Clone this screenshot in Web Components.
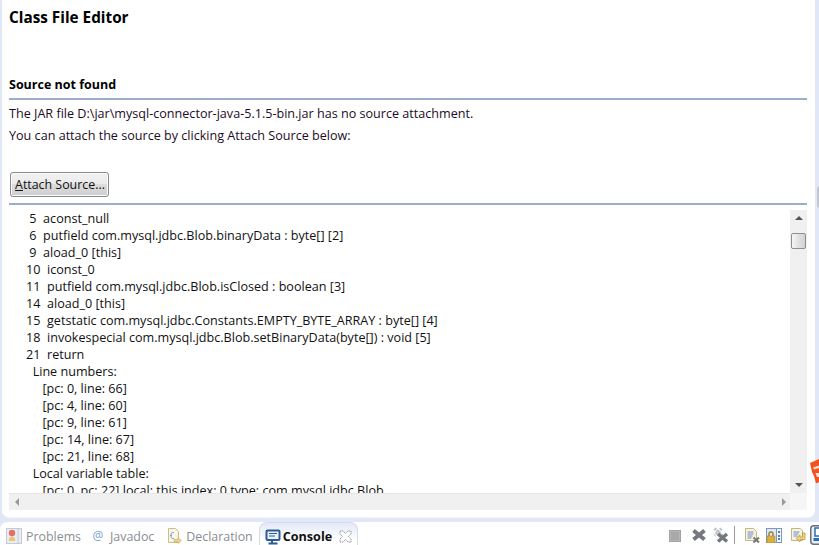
<!DOCTYPE html>
<html>
<head>
<meta charset="utf-8">
<title>Class File Editor</title>
<style>
  html, body { margin: 0; height: 100%; }
  body {
    width: 819px;
    height: 545px;
    overflow: hidden;
    background: #e1e7f6;
    font: 12.6px "Open Sans", sans-serif;
    color: #000;
  }
</style>
</head>
<body>
<editor-window>
  <editor-form>
    <code-view></code-view>
  </editor-form>
  <view-bar></view-bar>
</editor-window>

<script>
  // src/editor-window.js
  var windowTemplate = document.createElement("template");
  windowTemplate.innerHTML = `
<style>
  :host {
    display: flex;
    flex-direction: column;
    position: relative;
    width: 819px;
    height: 545px;
    overflow: hidden;
  }
  .panel {
    height: 518px;
    margin: 0 4px 0 2px;
    background: #fff;
    border-radius: 0 0 7px 7px;
    box-sizing: border-box;
    border-bottom: 1px solid #f1f4fa;
  }
  .gap { height: 4px; flex: none; }
  .badge {
    position: absolute;
    left: 809px;
    top: 458px;
    width: 10px;
    height: 26px;
  }
  .grip {
    position: absolute;
    left: 817px;
    top: 186px;
    width: 6px;
    height: 22px;
    border-radius: 3px;
    background: #c2c7d2;
  }
</style>
<div class="panel"><slot></slot></div>
<div class="gap"></div>
<slot name="bar"></slot>
<div class="grip"></div>
<svg class="badge" viewBox="0 0 10 26">
  <path d="M1 5 L10 1 V24 L7 25.500 L5 18 L3 14 Z" fill="#f4511e"/>
  <path d="M4 9.500 L10 7.500 V10 L5 11.500 Z" fill="#fbe3d8"/>
  <path d="M6.500 15 H10 V19 H8 Z" fill="#fbe3d8"/>
</svg>
`;
  class EditorWindow extends HTMLElement {
    constructor() {
      super();
      this.attachShadow({ mode: "open" });
    }
    connectedCallback() {
      this.shadowRoot.appendChild(windowTemplate.content.cloneNode(true));
      const bar = this.querySelector("view-bar");
      if (bar) bar.setAttribute("slot", "bar");
    }
  }
  customElements.define("editor-window", EditorWindow);

  // src/editor-form.js
  var formTemplate = document.createElement("template");
  formTemplate.innerHTML = `
<style>
  :host {
    display: flex;
    flex-direction: column;
    height: 517px;
    box-sizing: border-box;
    padding: 0 8px 7px 7px;
  }
  h1 {
    margin: 8px 0 0;
    font-size: 15.3px;
    line-height: 19px;
    font-weight: 700;
    height: 68px;
  }
  h2 {
    margin: 0;
    font-size: 12.5px;
    line-height: 17px;
    font-weight: 700;
  }
  hr {
    margin: 5px 0 0;
    border: 0;
    height: 2px;
    flex: none;
    background: #9cadcd;
  }
  p {
    margin: 0;
    line-height: 17px;
    color: #1c0c26;
  }
  .first { margin-top: 5px; }
  .second { margin-top: 5px; }
  button {
    display: block;
    margin: 28px 0 0 1px;
    width: 99px;
    height: 25px;
    flex: none;
    padding: 0 0 0 1px;
    font: inherit;
    font-size: 12.4px;
    color: #111;
    border: 1px solid #8a8a8a;
    border-radius: 3px;
    background: linear-gradient(#f2f2f2 0, #ebebeb 45%, #dcdcdc 50%, #cfcfcf 100%);
    box-shadow: inset 0 0 0 1px #fbfbfb;
  }
  .rule2 { margin-top: 6px; }
  .body { flex: 1; min-height: 0; display: flex; margin-top: 5px; }
</style>
<h1>Class File Editor</h1>
<h2>Source not found</h2>
<hr>
<p class="first">The JAR file D:\\jar\\mysql-connector-java-5.1.5-bin.jar has no source attachment.</p>
<p class="second">You can attach the source by clicking Attach Source below:</p>
<button><u>A</u>ttach Source...</button>
<hr class="rule2">
<div class="body"><slot></slot></div>
`;
  class EditorForm extends HTMLElement {
    constructor() {
      super();
      this.attachShadow({ mode: "open" });
    }
    connectedCallback() {
      this.shadowRoot.appendChild(formTemplate.content.cloneNode(true));
    }
  }
  customElements.define("editor-form", EditorForm);

  // src/code-view.js
  var codeTemplate = document.createElement("template");
  codeTemplate.innerHTML = `
<style>
  :host {
    display: grid;
    grid-template-columns: 1fr 17px;
    grid-template-rows: 1fr 17px;
    flex: 1;
    min-width: 0;
    min-height: 0;
  }
  pre {
    margin: 0;
    overflow: hidden;
    font: inherit;
    font-size: 12.6px;
    line-height: 17px;
    padding-left: 4px;
    color: #111;
    min-height: 0;
  }
  .vbar, .hbar { background: #f0f0f0; position: relative; display: flex; }
  .vbar { flex-direction: column; align-items: center; justify-content: space-between; }
  .hbar { align-items: center; justify-content: space-between; border-top: 1px solid #e6e6e6; box-sizing: border-box; }
  .corner { background: #f6f6f6; }
  .thumb {
    position: absolute;
    left: 1px;
    top: 23px;
    width: 15px;
    height: 16px;
    box-sizing: border-box;
    border: 1px solid #8f8f8f;
    border-radius: 2px;
    background: linear-gradient(90deg, #f6f6f6, #e2e2e2 50%, #d2d2d2);
  }
  i { width: 0; height: 0; border-style: solid; border-color: transparent; margin: 6px; }
  .up { border-width: 0 4px 4px; border-bottom-color: #555; }
  .down { border-width: 4px 4px 0; border-top-color: #555; }
  .left { border-width: 4px 4px 4px 0; border-right-color: #999; margin-left: 6px; }
  .right { border-width: 4px 0 4px 4px; border-left-color: #999; margin-right: 4px; }
</style>
<pre></pre>
<div class="vbar"><i class="up"></i><div class="thumb"></div><i class="down"></i></div>
<div class="hbar"><i class="left"></i><i class="right"></i></div>
<div class="corner"></div>
`;
  var codeLines = [
    "     5  aconst_null",
    "     6  putfield com.mysql.jdbc.Blob.binaryData : byte[] [2]",
    "     9  aload_0 [this]",
    "    10  iconst_0",
    "    11  putfield com.mysql.jdbc.Blob.isClosed : boolean [3]",
    "    14  aload_0 [this]",
    "    15  getstatic com.mysql.jdbc.Constants.EMPTY_BYTE_ARRAY : byte[] [4]",
    "    18  invokespecial com.mysql.jdbc.Blob.setBinaryData(byte[]) : void [5]",
    "    21  return",
    "      Line numbers:",
    "         [pc: 0, line: 66]",
    "         [pc: 4, line: 60]",
    "         [pc: 9, line: 61]",
    "         [pc: 14, line: 67]",
    "         [pc: 21, line: 68]",
    "      Local variable table:",
    "         [pc: 0, pc: 22] local: this index: 0 type: com.mysql.jdbc.Blob"
  ];
  class CodeView extends HTMLElement {
    constructor() {
      super();
      this.attachShadow({ mode: "open" });
    }
    connectedCallback() {
      this.shadowRoot.appendChild(codeTemplate.content.cloneNode(true));
      this.shadowRoot.querySelector("pre").textContent = codeLines.join("\n");
    }
  }
  customElements.define("code-view", CodeView);

  // src/view-bar.js
  var barTemplate = document.createElement("template");
  barTemplate.innerHTML = `
<style>
  :host {
    display: flex;
    height: 23px;
    background: #fff;
    font-size: 12.4px;
    border-radius: 7px 0 0 0;
    overflow: hidden;
    padding-left: 6px;
  }
  .tab { display: flex; align-items: center; gap: 4px; padding-top: 5px; color: #8a8d93; height: 23px; box-sizing: border-box; flex: none; }
  .tab svg { width: 16px; height: 16px; flex: none; }
  .tab + .tab { margin-left: 9px; }
  .tab + .tab.decl { margin-left: 12px; }
  .tab + .tab.on {
    margin-left: 6px;
    width: 99px;
    gap: 2px;
    padding-left: 5px;
    color: #111;
    font-size: 12.6px;
    font-weight: 700;
    background: linear-gradient(#e3e9f6, #fff 80%);
    border: 1px solid #d5dbe9;
    border-bottom: 0;
    border-radius: 8px 8px 0 0;
  }
  .tab.on .close { width: 13px; height: 13px; margin-left: 5px; }
  .tools { margin-left: auto; display: flex; align-items: flex-start; padding-top: 5px; box-sizing: border-box; height: 23px; flex: none; width: 152px; }
  .tools svg { width: 16px; height: 16px; flex: none; margin-left: 6px; }
  .tools svg:first-child { margin-left: 0; }
  .sep { width: 1px; height: 18px; background: #999; margin: -1px 9px 0 5px; flex: none; }
  .tools .sep + svg { margin-left: 0; }
  .tools .m8 { margin-left: 8px; }
  .tools .btn { margin-left: 4px; margin-top: -2px; width: 20px; height: 20px; }
</style>
<div class="tab">
  <svg viewBox="0 0 16 16">
    <rect x="0.500" y="0.500" width="15" height="15" fill="#e9edf3" stroke="#c3ccd8"/>
    <path d="M12 1v14" stroke="#c3ccd8"/>
    <circle cx="6" cy="5" r="3.200" fill="#e4706c"/>
    <path d="M3 13v-2.500L6 8l3 2.500V13z" fill="#efc66e"/>
  </svg>
  <span>Problems</span>
</div>
<div class="tab">
  <svg viewBox="0 0 16 16"><text x="8" y="12" text-anchor="middle" font-size="12" font-family="Open Sans" fill="#7ba3d0">@</text></svg>
  <span>Javadoc</span>
</div>
<div class="tab decl">
  <svg viewBox="0 0 16 16">
    <path d="M2.500 0.500h7l3 3v11h-10z" fill="#faf6e6" stroke="#c9bd90"/>
    <path d="M8 4.500a2.500 2.500 0 0 0-3 1.500v3a2.500 2.500 0 0 0 3 1.500M4 7.500h2" stroke="#7da3cf" fill="none"/>
    <path d="M8 11.500h4V9.500l3.500 3-3.500 3v-2H8z" fill="#f0d98e" stroke="#c8a850" stroke-width=".6"/>
  </svg>
  <span>Declaration</span>
</div>
<div class="tab on">
  <svg viewBox="0 0 16 16">
    <rect x="1.500" y="1.500" width="13" height="9.500" rx="1" fill="#eaf1fa" stroke="#2d5a94" stroke-width="2"/>
    <path d="M4 4.500h8M4 7h6" stroke="#2d5a94"/>
    <path d="M7 12v2M3.500 14.500h9" stroke="#2d5a94" stroke-width="2"/>
  </svg>
  <span>Console</span>
  <svg class="close" viewBox="0 0 13 13"><path d="M1 1h3l2.500 2.500L9 1h3v3L9.500 6.500 12 9v3H9L6.500 9.500 4 12H1V9l2.500-2.500L1 4z" fill="#fff" stroke="#9a9a9a" stroke-dasharray="1.500 .6"/></svg>
</div>
<div class="tools">
  <svg viewBox="0 0 16 16"><rect x="2.500" y="3.500" width="11" height="11" fill="#b5b5b5" stroke="#a2a2a2"/><rect x="4" y="5" width="8" height="8" fill="#a8a8a8"/></svg>
  <svg class="m8" viewBox="0 0 16 16"><path d="M2.500 3.500l11 9M13.500 3.500l-11 9" stroke="#75797e" stroke-width="4"/></svg>
  <svg viewBox="0 0 16 16">
    <path d="M1.500 1.500l8 7M8.500 1.500l-7 7" stroke="#bfc3c8" stroke-width="3" stroke-dasharray="2 1"/>
    <path d="M5 7l9 7.500M14 7l-9 7.500" stroke="#75797e" stroke-width="3.500"/>
  </svg>
  <div class="sep"></div>
  <svg viewBox="0 0 16 16">
    <path d="M1.500 1.500h8l3 3v9h-11z" fill="#f7f3e2" stroke="#c4b680"/>
    <path d="M3.500 5h6M3.500 7h6M3.500 9h5M3.500 11h4" stroke="#6d8fc0"/>
    <path d="M9.500 10.500l5.500 5M15 10.500l-5.500 5" stroke="#787878" stroke-width="2"/>
  </svg>
  <svg viewBox="0 0 16 16">
    <rect x="0.500" y="1.500" width="15" height="14" fill="#dfe8f4" stroke="#7a98c0"/>
    <rect x="10.500" y="1.500" width="5" height="14" fill="#f4f7fb" stroke="#7a98c0"/>
    <path d="M12 5h2M12 9h2M12 12h2" stroke="#4f7fb8" stroke-width="2"/>
    <rect x="1" y="9" width="8" height="7" fill="#dcae3f" stroke="#a88a2f" stroke-width=".6"/>
    <path d="M3 9V7a2 2 0 0 1 4 0v2" stroke="#9a7f2f" stroke-width="1.400" fill="none"/>
  </svg>
  <svg class="m8" viewBox="0 0 16 16">
    <path d="M1.500 1.500h9l2 2v10h-11z" fill="#f7f3e2" stroke="#c4b680"/>
    <path d="M3.500 5h6M3.500 7h5M3.500 9h4" stroke="#6d8fc0"/>
    <path d="M15 6v6.500H10V15l-4-3.500L10 8v2h2.500V6z" fill="#efd27c" stroke="#b8953f" stroke-width=".7"/>
  </svg>
  <svg class="btn" viewBox="0 0 20 20">
    <rect x="0.750" y="0.750" width="18.500" height="18.500" rx="3" fill="#e8eef6" stroke="#6f6f6f" stroke-width="1.500"/>
    <path d="M5 3h9v8H5z" fill="#fff" stroke="#2d6bb0" stroke-width="1.500"/>
    <path d="M3.500 13h12v3h-12z" fill="#2d6bb0"/>
  </svg>
</div>
`;
  class ViewBar extends HTMLElement {
    constructor() {
      super();
      this.attachShadow({ mode: "open" });
    }
    connectedCallback() {
      this.shadowRoot.appendChild(barTemplate.content.cloneNode(true));
    }
  }
  customElements.define("view-bar", ViewBar);
</script>
</body>
</html>
